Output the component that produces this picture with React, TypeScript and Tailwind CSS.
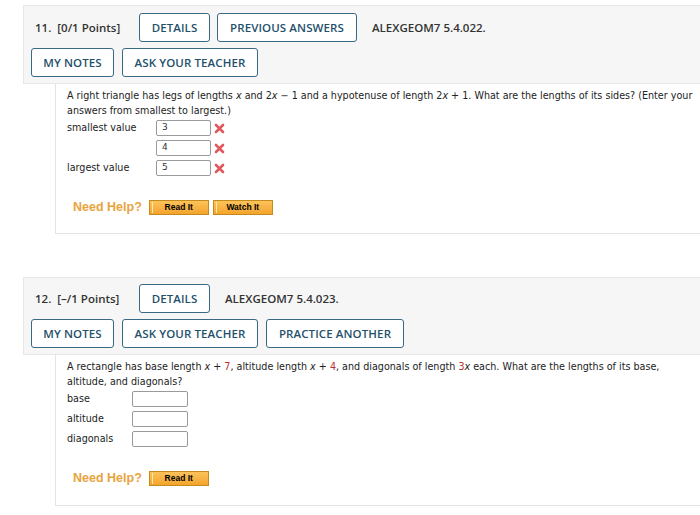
import React from "react";

const hdr = { fontFamily: '"Open Sans", "Liberation Sans", sans-serif' };
const body = { fontFamily: '"DejaVu Sans", Verdana, sans-serif' };
const arial = { fontFamily: '"Liberation Sans", Arial, sans-serif' };

function Btn({ w, children }: { w: string; children: React.ReactNode }) {
  return (
    <div
      className={`${w} h-[29px] flex items-center justify-center border border-[#3a6983] rounded-[3px] bg-white text-[#24506b] text-[11.5px] font-semibold tracking-[0.1px]`}
      style={hdr}
    >
      {children}
    </div>
  );
}

function XMark() {
  return (
    <svg width="11" height="11" viewBox="0 0 11 11" className="ml-[3px]">
      <path d="M2 2 L9 9 M9 2 L2 9" stroke="#e2585f" strokeWidth="2.6" strokeLinecap="round" />
    </svg>
  );
}

function OrangeBtn({ children }: { children: React.ReactNode }) {
  return (
    <div className="w-[60px] h-[15px] relative border border-[#c48a1e] bg-gradient-to-b from-[#fcc35a] to-[#f3a42a] flex items-center justify-center">
      <div className="absolute left-[2px] top-[1px] bottom-[1px] w-[1px] bg-[#ffe7b0]" />
      <span className="text-[8.5px] font-bold text-black" style={arial}>
        {children}
      </span>
    </div>
  );
}

function Input({ value, w }: { value?: string; w: string }) {
  return (
    <div
      className={`${w} h-[16px] border border-[#9a9a9a] rounded-[2px] bg-white flex items-center pl-[5px] text-[9px] text-[#333]`}
      style={body}
    >
      {value}
    </div>
  );
}

function NeedHelp({ children, mt }: { children: React.ReactNode; mt: string }) {
  return (
    <div className={`${mt} h-[20px] flex items-center pl-[6px]`}>
      <span className="text-[12.5px] font-bold text-[#e8a33d] mr-[7px]" style={arial}>
        Need Help?
      </span>
      <div className="flex gap-[4px]">{children}</div>
    </div>
  );
}

const R = ({ children }: { children: React.ReactNode }) => (
  <span className="text-[#b8322f]">{children}</span>
);
const X = () => <i>x</i>;

export default function App() {
  return (
    <div className="w-[700px] h-[515px] bg-white overflow-hidden pt-[5px]">
      {/* Question 11 */}
      <div className="ml-[23px]">
        <div className="bg-[#f6f6f6] border border-r-0 border-[#e7e7e7] pl-[7px] pt-[7px] pb-[6px]">
          <div className="flex items-center h-[29px]">
            <span className="ml-[4px] w-[104px] text-[11.5px] font-semibold text-[#333]" style={hdr}>
              11.&nbsp; [0/1 Points]
            </span>
            <Btn w="w-[71px]">DETAILS</Btn>
            <div className="w-[7px]" />
            <Btn w="w-[140px]">PREVIOUS ANSWERS</Btn>
            <span className="ml-[15px] text-[11.5px] font-semibold text-[#333]" style={hdr}>
              ALEXGEOM7 5.4.022.
            </span>
          </div>
          <div className="flex gap-[8px] mt-[6px]">
            <Btn w="w-[83px]">MY NOTES</Btn>
            <Btn w="w-[136px]">ASK YOUR TEACHER</Btn>
          </div>
        </div>
        <div className="ml-[32px] border-l border-b border-[#e4e4e4] pl-[11px] pt-[4px] pb-[16px] text-[9.6px] text-[#222]" style={body}>
          <div className="leading-[15px]">
            A right triangle has legs of lengths <X /> and 2<X /> − 1 and a hypotenuse of length 2<X /> + 1. What are the lengths of its sides? (Enter your
            <br />
            answers from smallest to largest.)
          </div>
          <div className="flex items-center h-[20px]">
            <span className="w-[89px]">smallest value</span>
            <Input w="w-[55px]" value="3" />
            <XMark />
          </div>
          <div className="flex items-center h-[20px]">
            <span className="w-[89px]"></span>
            <Input w="w-[55px]" value="4" />
            <XMark />
          </div>
          <div className="flex items-center h-[20px]">
            <span className="w-[89px]">largest value</span>
            <Input w="w-[55px]" value="5" />
            <XMark />
          </div>
          <NeedHelp mt="mt-[19px]">
            <OrangeBtn>Read It</OrangeBtn>
            <OrangeBtn>Watch It</OrangeBtn>
          </NeedHelp>
        </div>
      </div>

      {/* Question 12 */}
      <div className="ml-[23px] mt-[43px]">
        <div className="bg-[#f6f6f6] border border-r-0 border-[#e7e7e7] pl-[7px] pt-[6px] pb-[6px]">
          <div className="flex items-center h-[29px]">
            <span className="ml-[4px] w-[104px] text-[11.5px] font-semibold text-[#333]" style={hdr}>
              12.&nbsp; [–/1 Points]
            </span>
            <Btn w="w-[71px]">DETAILS</Btn>
            <span className="ml-[15px] text-[11.5px] font-semibold text-[#333]" style={hdr}>
              ALEXGEOM7 5.4.023.
            </span>
          </div>
          <div className="flex gap-[8px] mt-[6px]">
            <Btn w="w-[83px]">MY NOTES</Btn>
            <Btn w="w-[136px]">ASK YOUR TEACHER</Btn>
            <Btn w="w-[138px]">PRACTICE ANOTHER</Btn>
          </div>
        </div>
        <div className="ml-[32px] border-l border-b border-[#e4e4e4] pl-[11px] pt-[4px] pb-[17px] text-[9.6px] text-[#222]" style={body}>
          <div className="leading-[15px]">
            A rectangle has base length <X /> + <R>7</R>, altitude length <X /> + <R>4</R>, and diagonals of length <R>3</R><X /> each. What are the lengths of its base,
            <br />
            altitude, and diagonals?
          </div>
          <div className="flex items-center h-[20px]">
            <span className="w-[65px]">base</span>
            <Input w="w-[56px]" />
          </div>
          <div className="flex items-center h-[20px]">
            <span className="w-[65px]">altitude</span>
            <Input w="w-[56px]" />
          </div>
          <div className="flex items-center h-[20px]">
            <span className="w-[65px]">diagonals</span>
            <Input w="w-[56px]" />
          </div>
          <NeedHelp mt="mt-[19px]">
            <OrangeBtn>Read It</OrangeBtn>
          </NeedHelp>
        </div>
      </div>
    </div>
  );
}
